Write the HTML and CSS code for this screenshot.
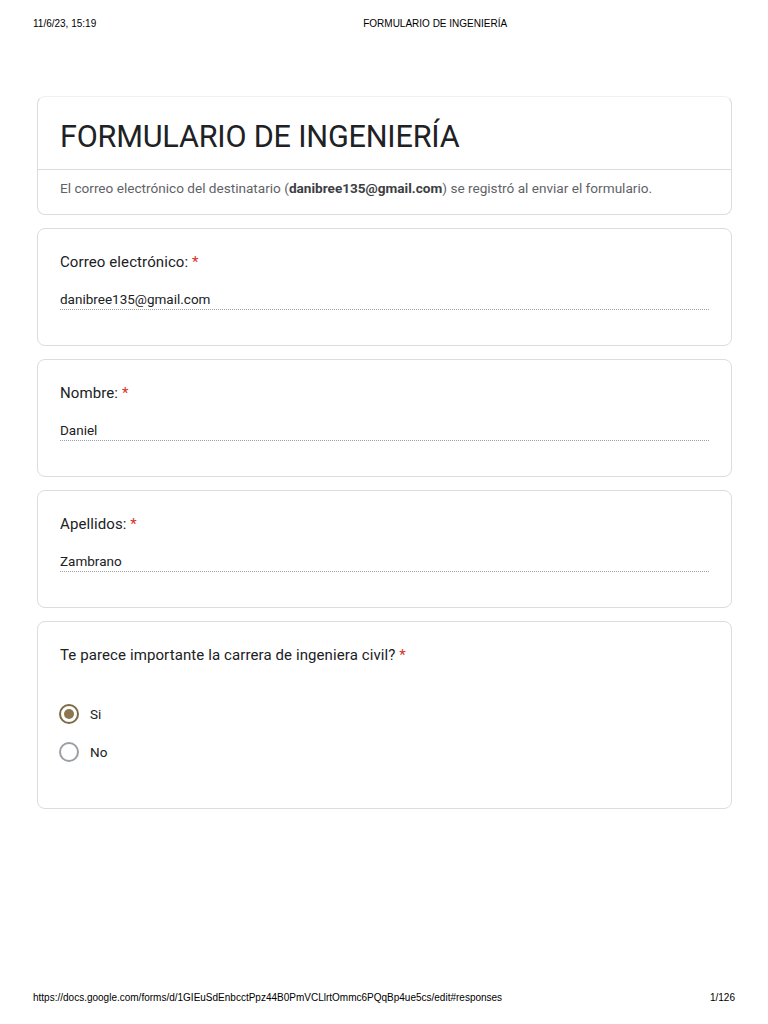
FILE: index.html
```html
<!DOCTYPE html>
<html lang="es">
  <head>
    <meta charset="UTF-8" />
    <meta name="viewport" content="width=device-width, initial-scale=1.0" />
    <title>FORMULARIO DE INGENIERÍA</title>
    <link rel="stylesheet" href="styles.css">
  </head>
  <body>
    <div class="print-header">
      <span class="print-date">11/6/23, 15:19</span>
      <span class="print-title">FORMULARIO DE INGENIERÍA</span>
    </div>

    <div class="form">
      <div class="card header-card">
        <h1 class="form-title">FORMULARIO DE INGENIERÍA</h1>
        <div class="form-note">
          El correo electrónico del destinatario (<b>danibree135@gmail.com</b>) se registró al enviar el formulario.
        </div>
      </div>

      <div class="card">
        <div class="question">Correo electrónico: <span class="req">*</span></div>
        <div class="answer">danibree135@gmail.com</div>
      </div>

      <div class="card">
        <div class="question">Nombre: <span class="req">*</span></div>
        <div class="answer">Daniel</div>
      </div>

      <div class="card">
        <div class="question">Apellidos: <span class="req">*</span></div>
        <div class="answer">Zambrano</div>
      </div>

      <div class="card radio-card">
        <div class="question">Te parece importante la carrera de ingeniera civil? <span class="req">*</span></div>
        <div class="options">
          <div class="option">
            <span class="radio checked"></span>
            <span>Si</span>
          </div>
          <div class="option">
            <span class="radio"></span>
            <span>No</span>
          </div>
        </div>
      </div>
    </div>

    <div class="print-footer">
      <span>https://docs.google.com/forms/d/1GIEuSdEnbcctPpz44B0PmVCLlrtOmmc6PQqBp4ue5cs/edit#responses</span>
      <span>1/126</span>
    </div>
  </body>
</html>
```

FILE: styles.css
```css
body {
  margin: 0;
  width: 768px;
  height: 1024px;
  font-family: Roboto, "Liberation Sans", sans-serif;
  color: #202124;
  background: #fff;
  display: flex;
  flex-direction: column;
}

.print-header {
  display: flex;
  padding: 18px 33px 0;
  height: 96px;
  box-sizing: border-box;
  font-family: "Liberation Sans", Arial, sans-serif;
  font-size: 10px;
  color: #000;
}

.print-title {
  margin-left: 267px;
}

.form {
  display: flex;
  flex-direction: column;
  gap: 13px;
  padding: 0 36px 0 37px;
}

.card {
  border: 1px solid #dadce0;
  border-radius: 8px;
  padding: 21px 22px 35px;
  background: #fff;
}

.header-card {
  border-top-color: #f1f1f1;
  padding: 0;
}

.form-title {
  margin: 0;
  padding: 21px 22px 13px;
  font-size: 30.6px;
  font-weight: 400;
  line-height: 38px;
  letter-spacing: -0.2px;
  border-bottom: 1px solid #dadce0;
}

.form-note {
  padding: 8px 22px 16px;
  font-size: 13.6px;
  line-height: 20px;
  color: #5f6368;
}

.form-note b {
  color: #3c4043;
  font-weight: 700;
}

.question {
  font-size: 15px;
  line-height: 24px;
  letter-spacing: 0.1px;
}

.req {
  color: #d93025;
}

.answer {
  margin-top: 15px;
  font-size: 13.5px;
  line-height: 20px;
  border-bottom: 1px dotted #9aa0a6;
}

.radio-card {
  padding-bottom: 46px;
}

.options {
  display: flex;
  flex-direction: column;
  gap: 18px;
  margin-top: 37px;
}

.option {
  display: flex;
  align-items: center;
  gap: 11px;
  font-size: 13.5px;
  line-height: 20px;
  margin-left: -1px;
}

.radio {
  width: 16px;
  height: 16px;
  border: 2px solid #9aa0a6;
  border-radius: 50%;
  display: flex;
  align-items: center;
  justify-content: center;
}

.radio.checked {
  border-color: #7d6a46;
}

.radio.checked::after {
  content: "";
  width: 10px;
  height: 10px;
  border-radius: 50%;
  background: #8c7650;
}

.print-footer {
  margin-top: auto;
  display: flex;
  justify-content: space-between;
  padding: 0 33px 21px;
  font-family: "Liberation Sans", Arial, sans-serif;
  font-size: 10px;
  color: #000;
}
```
